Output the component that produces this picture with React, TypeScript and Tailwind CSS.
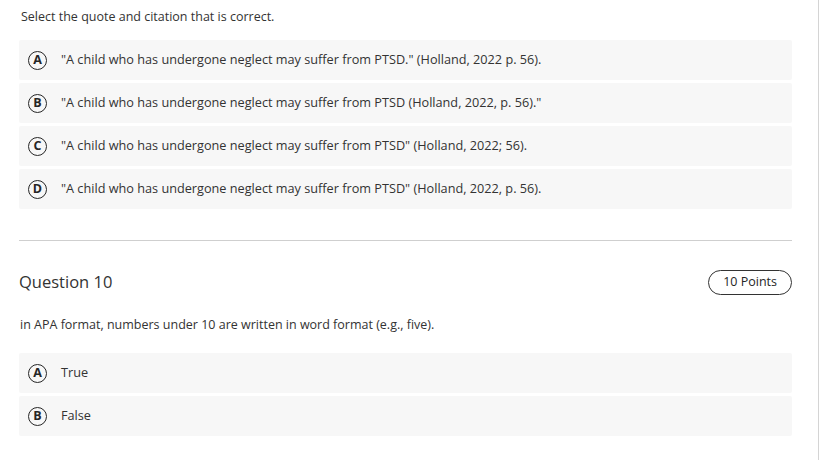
import React from 'react'

interface Choice {
  letter: string
  text: string
}

const QUOTES: Choice[] = [
  { letter: 'A', text: '"A child who has undergone neglect may suffer from PTSD." (Holland, 2022 p. 56).' },
  { letter: 'B', text: '"A child who has undergone neglect may suffer from PTSD (Holland, 2022, p. 56)."' },
  { letter: 'C', text: '"A child who has undergone neglect may suffer from PTSD" (Holland, 2022; 56).' },
  { letter: 'D', text: '"A child who has undergone neglect may suffer from PTSD" (Holland, 2022, p. 56).' },
]

const TRUE_FALSE: Choice[] = [
  { letter: 'A', text: 'True' },
  { letter: 'B', text: 'False' },
]

function ChoiceRow({ choice }: { choice: Choice }) {
  return (
    <div className="flex items-center h-[40px] bg-[#f7f7f7] rounded-[2px] pl-[9px] gap-[14px]">
      <span className="shrink-0 flex items-center justify-center w-[19px] h-[19px] rounded-full border-[1.5px] border-[#262626] text-[12.5px] font-bold text-[#262626] leading-none">
        {choice.letter}
      </span>
      <span className="text-[12.7px] text-[#333]">{choice.text}</span>
    </div>
  )
}

export default function App() {
  return (
    <div className="w-[819px] min-h-[460px] border-r border-[#d4d4d4] bg-white font-['Open_Sans',sans-serif]">
      <div className="pl-[19px] pr-[26px] pt-[8px] pb-[24px]">
        <p className="text-[12.5px] text-[#333] pl-[2px] leading-[18px]">Select the quote and citation that is correct.</p>

        <div className="mt-[14px] flex flex-col gap-[3px]">
          {QUOTES.map(q => (
            <ChoiceRow key={q.letter} choice={q} />
          ))}
        </div>

        <div className="mt-[31px] border-t border-[#cfcfcf]" />

        <div className="mt-[28px] flex items-center justify-between">
          <h2 className="text-[16.5px] text-[#333] leading-[26px]">Question 10</h2>
          <span className="h-[25px] px-[14px] flex items-center rounded-full border border-[#333] text-[12.5px] text-[#262626]">
            10 Points
          </span>
        </div>

        <p className="mt-[21px] text-[12.5px] text-[#333] pl-[1px] leading-[18px]">
          in APA format, numbers under 10 are written in word format (e.g., five).
        </p>

        <div className="mt-[19px] flex flex-col gap-[3px]">
          {TRUE_FALSE.map(c => (
            <ChoiceRow key={c.letter} choice={c} />
          ))}
        </div>
      </div>
    </div>
  )
}
